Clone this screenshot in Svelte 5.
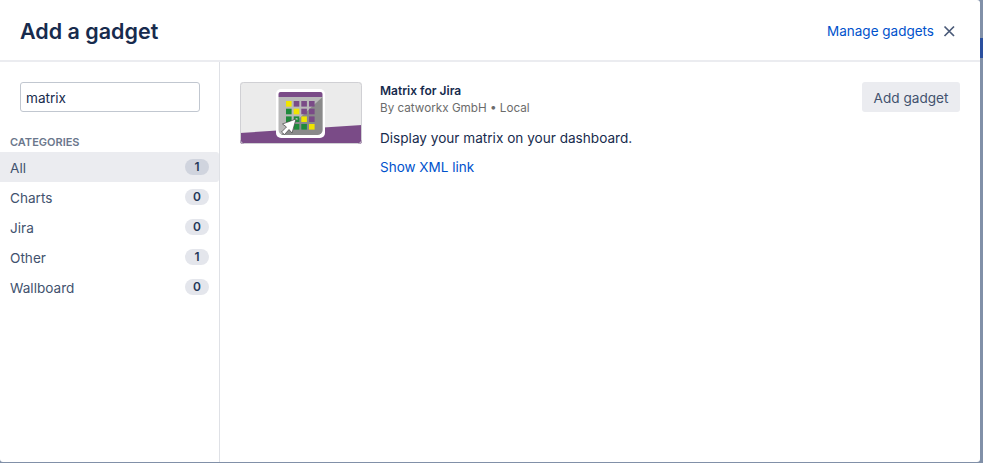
<script>
  const categories = [
    { name: "All", count: 1, selected: true },
    { name: "Charts", count: 0 },
    { name: "Jira", count: 0 },
    { name: "Other", count: 1 },
    { name: "Wallboard", count: 0 }
  ];

  const cellX = [46, 53.7, 61.3, 69];
  const cellY = [19, 26.7, 34.4, 42];
  const cells = [
    ["#f0e500", "#7a4b87", "#7a4b87", "#7a4b87"],
    ["#1f8a3c", "#f0e500", "#7a4b87", "#7a4b87"],
    ["#1f8a3c", "#1f8a3c", "#f0e500", "#7a4b87"],
    [null, "#1f8a3c", "#1f8a3c", "#f0e500"]
  ];

  let search = $state("matrix");
</script>

<div class="backdrop">
  <div class="dialog">
    <header>
      <h1>Add a gadget</h1>
      <div class="header-actions">
        <a href="#manage">Manage gadgets</a>
        <button class="close" type="button" aria-label="Close">
          <svg width="12" height="12" viewBox="0 0 12 12">
            <path d="M1.5 1.5l9.5 9.5M11 1.5L1.5 11" stroke="#4a5a78" stroke-width="1.7" fill="none" />
          </svg>
        </button>
      </div>
    </header>

    <div class="body">
      <aside>
        <div class="search">
          <input type="text" bind:value={search} />
        </div>
        <h2>Categories</h2>
        <ul>
          {#each categories as cat}
            <li class="row" class:selected={cat.selected}>
              <span class="name">{cat.name}</span>
              <span class="badge">{cat.count}</span>
            </li>
          {/each}
        </ul>
      </aside>

      <main>
        <div class="gadget">
          <svg class="thumb" width="122" height="62" viewBox="0 0 122 62">
            <defs>
              <clipPath id="thumb-clip"><rect width="122" height="62" rx="3" /></clipPath>
            </defs>
            <g clip-path="url(#thumb-clip)">
              <rect width="122" height="62" fill="#ebebeb" />
              <path d="M0 51L122 43V62H0z" fill="#7a4b87" />
            </g>
            <rect x="0.5" y="0.5" width="121" height="61" rx="3" fill="none" stroke="#d0d0d4" />
            <rect x="36" y="7" width="49" height="49" rx="5" fill="#fff" />
            <path d="M38.5 15h44v33a5 5 0 0 1-5 5h-34a5 5 0 0 1-5-5z" fill="#b9b9b9" />
            <path d="M82.5 15v33a5 5 0 0 1-5 5H41z" fill="#8a8a8a" />
            <path d="M38.5 15v-3a2 2 0 0 1 2-2h40a2 2 0 0 1 2 2v3z" fill="#7a4b87" />
            {#each cells as row, r}
              {#each row as color, c}
                {#if color}
                  <rect x={cellX[c]} y={cellY[r]} width="5.6" height="5.6" fill={color} />
                {/if}
              {/each}
            {/each}
            <rect x="55.5" y="36" width="2" height="2" fill="#8fd0a0" />
            <path d="M56 37L42.5 42l4 3-5 5 3 2.5 4.5-5 3 3.5z" fill="#fff" stroke="#444" stroke-width="0.7" stroke-linejoin="round" />
          </svg>

          <div class="info">
            <h3>Matrix for Jira</h3>
            <p class="by">By catworkx GmbH • Local</p>
            <p class="desc">Display your matrix on your dashboard.</p>
            <a href="#xml">Show XML link</a>
          </div>

          <button class="add" type="button">Add gadget</button>
        </div>
      </main>
    </div>
  </div>
  <div class="page-peek"></div>
</div>

<style>
  :global(body) {
    margin: 0;
    background: #7f8ba3;
  }

  .backdrop {
    position: relative;
    height: 463px;
    width: 983px;
    overflow: hidden;
    background: #8190a8;
    font-family: Inter, "Liberation Sans", sans-serif;
    color: #172b4d;
  }

  /* bit of the page behind the dialog showing through the blanket */
  .page-peek {
    position: absolute;
    left: 980px;
    top: 38px;
    width: 3px;
    height: 20px;
    background: #2a4f9e;
  }

  .dialog {
    width: 980px;
    height: 462px;
    background: #fff;
    border-radius: 0 3px 3px 3px;
    display: flex;
    flex-direction: column;
  }

  header {
    box-sizing: border-box;
    height: 62px;
    flex: none;
    display: flex;
    justify-content: space-between;
    align-items: center;
    padding: 2px 25px 0 20px;
    border-bottom: 2px solid #ebecf0;
  }

  h1 {
    margin: 0;
    font-size: 21.5px;
    line-height: 28px;
    font-weight: 600;
    color: #172b4d;
  }

  .header-actions {
    display: flex;
    align-items: center;
    gap: 9px;
  }

  a {
    color: #0052cc;
    font-size: 13.5px;
    line-height: 20px;
    text-decoration: none;
  }

  .close {
    border: 0;
    padding: 0;
    background: none;
    display: flex;
    width: 12px;
    height: 12px;
  }

  .body {
    flex: 1;
    display: flex;
    min-height: 0;
  }

  aside {
    width: 219px;
    flex: none;
    border-right: 1px solid #dfe1e6;
  }

  .search {
    padding: 20px 19px 0 20px;
  }

  input {
    box-sizing: border-box;
    width: 180px;
    height: 30px;
    display: block;
    padding: 2px 5px 0;
    border: 1px solid #c1c7d0;
    border-radius: 3px;
    font: inherit;
    font-size: 13.6px;
    color: #172b4d;
    background: #fff;
    outline: none;
  }

  h2 {
    margin: 23px 0 0 10px;
    font-size: 11px;
    line-height: 14px;
    font-weight: 600;
    letter-spacing: 0;
    text-transform: uppercase;
    color: #6b778c;
  }

  ul {
    list-style: none;
    margin: 3px 0 0;
    padding: 0;
  }

  .row {
    height: 30px;
    display: flex;
    align-items: center;
    justify-content: space-between;
    padding: 0 10px;
    font-size: 13.6px;
    color: #42526e;
  }

  .name {
    padding-top: 2px;
  }

  .row.selected {
    background: #ebecf0;
    border-radius: 0 3px 3px 0;
  }

  .badge {
    min-width: 24px;
    box-sizing: border-box;
    height: 16px;
    border-radius: 8px;
    background: #e4e6ec;
    color: #253858;
    font-size: 12px;
    font-weight: 600;
    line-height: 16px;
    text-align: center;
  }

  .selected .badge {
    background: #d0d4de;
  }

  main {
    flex: 1;
    padding: 20px 20px 0;
  }

  .gadget {
    display: flex;
    align-items: flex-start;
  }

  .thumb {
    flex: none;
    display: block;
  }

  .info {
    flex: 1;
    margin-left: 18px;
  }

  h3 {
    margin: 1px 0 0;
    font-size: 12px;
    line-height: 16px;
    font-weight: 600;
    color: #172b4d;
  }

  .by {
    margin: 1px 0 0;
    font-size: 11.7px;
    line-height: 16px;
    color: #6b6b6b;
  }

  .desc {
    margin: 12px 0 0;
    font-size: 13.6px;
    line-height: 20px;
    color: #172b4d;
  }

  .info a {
    display: block;
    margin-top: 9px;
  }

  .add {
    flex: none;
    width: 98px;
    height: 30px;
    border: 0;
    border-radius: 3px;
    background: #ebecf0;
    color: #42526e;
    font: inherit;
    font-size: 13.6px;
    padding: 1px 0 0;
  }
</style>
